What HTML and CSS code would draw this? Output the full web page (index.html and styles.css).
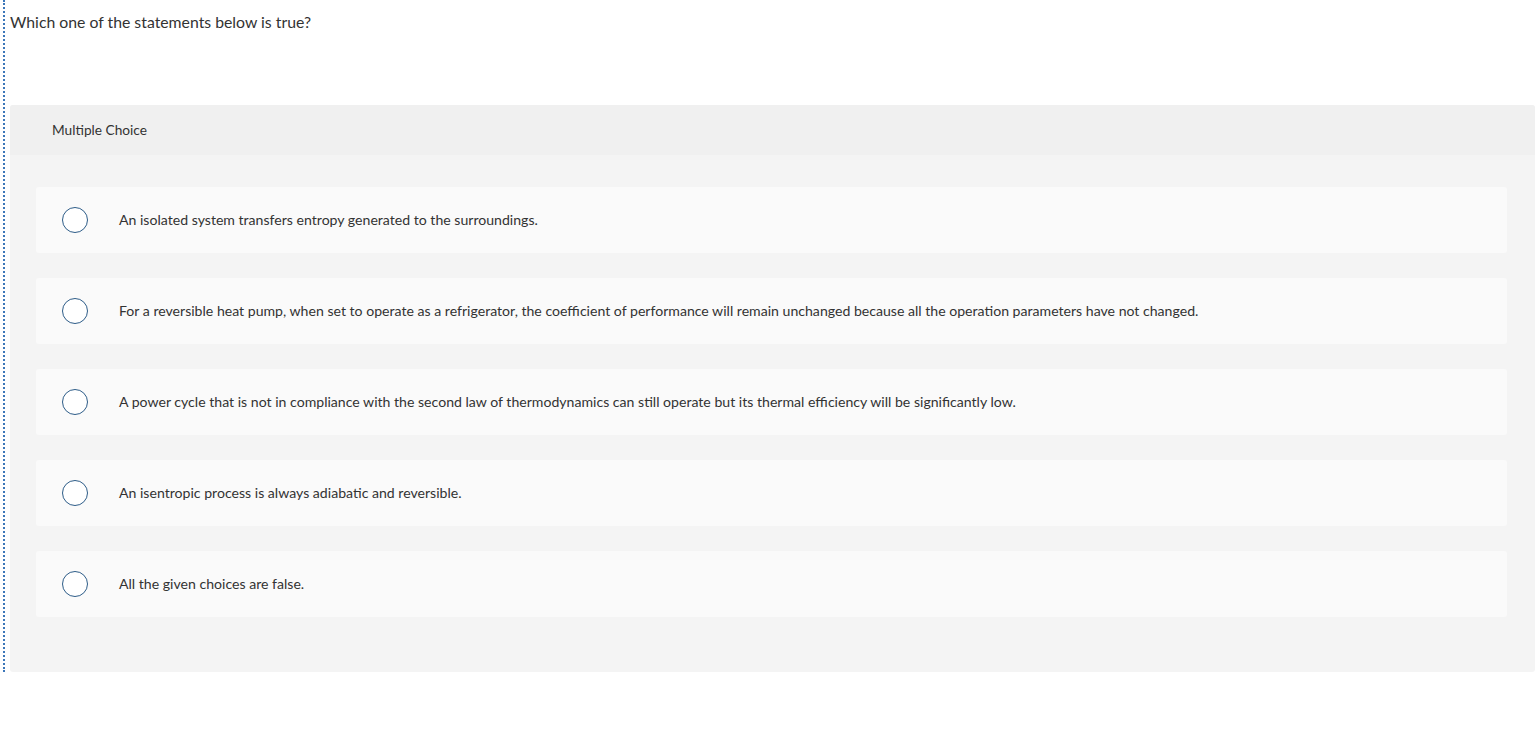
FILE: index.html
```html
<!DOCTYPE html>
<html lang="en">
<head>
    <meta charset="UTF-8">
    <meta name="viewport" content="width=device-width, initial-scale=1.0">
    <title>Multiple Choice</title>
    <link rel="stylesheet" href="styles.css">
</head>
<body>
    <div class="question">
        <p class="prompt">Which one of the statements below is true?</p>

        <!-- Answer panel -->
        <section class="panel">
            <div class="panel-header">Multiple Choice</div>
            <div class="choices">
                <label class="choice">
                    <span class="radio"></span>
                    <span class="choice-text">An isolated system transfers entropy generated to the surroundings.</span>
                </label>
                <label class="choice">
                    <span class="radio"></span>
                    <span class="choice-text">For a reversible heat pump, when set to operate as a refrigerator, the coefficient of performance will remain unchanged because all the operation parameters have not changed.</span>
                </label>
                <label class="choice">
                    <span class="radio"></span>
                    <span class="choice-text">A power cycle that is not in compliance with the second law of thermodynamics can still operate but its thermal efficiency will be significantly low.</span>
                </label>
                <label class="choice">
                    <span class="radio"></span>
                    <span class="choice-text">An isentropic process is always adiabatic and reversible.</span>
                </label>
                <label class="choice">
                    <span class="radio"></span>
                    <span class="choice-text">All the given choices are false.</span>
                </label>
            </div>
        </section>
    </div>
</body>
</html>
```

FILE: styles.css
```css
/* Question layout */
body {
    font-family: Lato, "Open Sans", sans-serif;
    color: #333;
    background: #fff;
    margin: 0;
    padding: 0;
}

.question {
    margin-left: 3px;
    padding-left: 5px;
    border-left: 2px dotted #3b76b9;
}

.prompt {
    margin: 0;
    padding-top: 12px;
    font-size: 15.8px;
    line-height: 20px;
    height: 93px;
}

.panel {
    background: #f4f4f4;
    border-radius: 3px;
}

.panel-header {
    background: #f0f0f0;
    height: 50px;
    line-height: 50px;
    padding-left: 42px;
    font-size: 13.7px;
    border-radius: 3px 3px 0 0;
}

.choices {
    display: flex;
    flex-direction: column;
    gap: 25px;
    padding: 32px 28px 55px 26px;
}

.choice {
    display: flex;
    align-items: center;
    height: 66px;
    padding-left: 26px;
    background: #fafafa;
    border-radius: 3px;
    font-size: 14.1px;
}

.choice-text {
    margin-top: -1px;
}

.radio {
    flex: none;
    width: 24px;
    height: 24px;
    border: 1.5px solid #2d5c88;
    border-radius: 50%;
    background: #fff;
    margin-right: 31px;
}
```
